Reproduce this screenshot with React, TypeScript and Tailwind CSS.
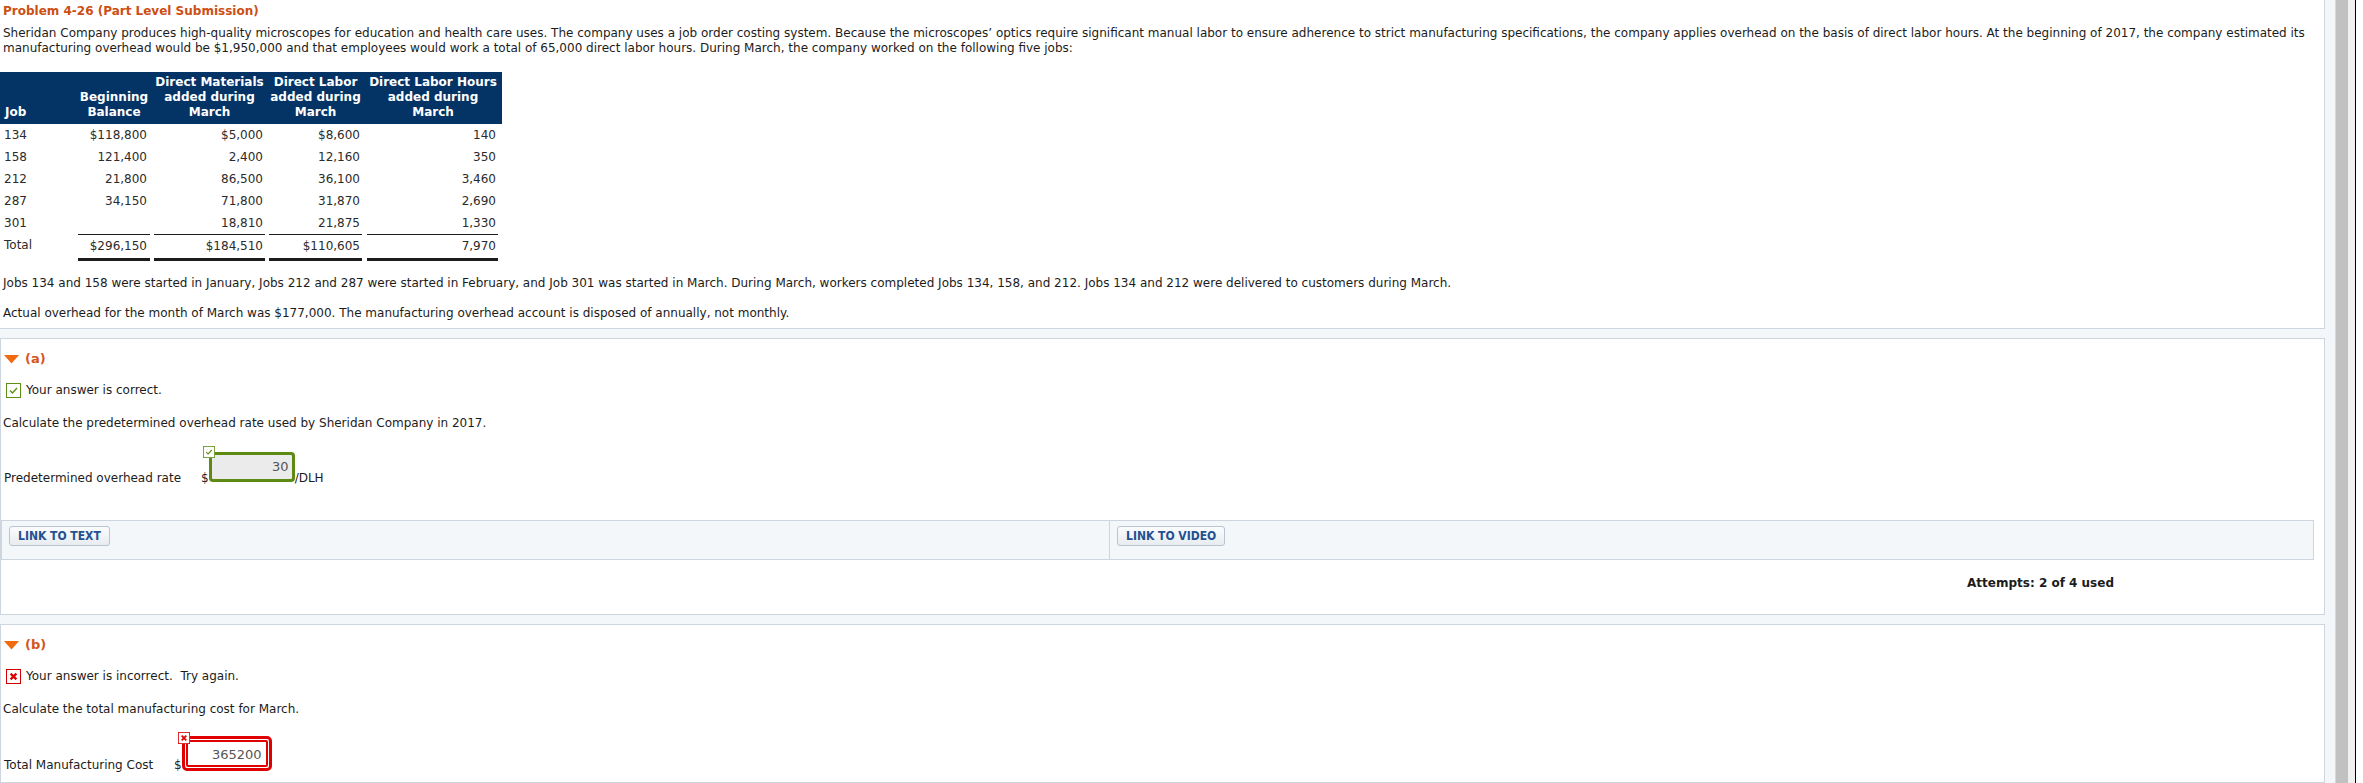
import React from 'react';

const rows = [
  { job: '134', bb: '$118,800', dm: '$5,000', dl: '$8,600', dlh: '140' },
  { job: '158', bb: '121,400', dm: '2,400', dl: '12,160', dlh: '350' },
  { job: '212', bb: '21,800', dm: '86,500', dl: '36,100', dlh: '3,460' },
  { job: '287', bb: '34,150', dm: '71,800', dl: '31,870', dlh: '2,690' },
  { job: '301', bb: '', dm: '18,810', dl: '21,875', dlh: '1,330' },
];

function Triangle() {
  return (
    <svg width="15" height="10" viewBox="0 0 15 10" className="shrink-0">
      <polygon points="0,1 15,1 7.5,9.5" fill="#f26a10" />
    </svg>
  );
}

function CheckBox({ size = 15 }: { size?: number }) {
  return (
    <svg width={size} height={size} viewBox="0 0 15 15" className="shrink-0 bg-white">
      <rect x="0.5" y="0.5" width="14" height="14" fill="#fff" stroke="#5d8f16" />
      <path d="M4 7.6 L6.4 10 L11 5" fill="none" stroke="#5d8f16" strokeWidth="1.4" />
    </svg>
  );
}

function CrossBox({ size = 15 }: { size?: number }) {
  return (
    <svg width={size} height={size} viewBox="0 0 15 15" className="shrink-0 bg-white">
      <rect x="0.5" y="0.5" width="14" height="14" fill="#fff" stroke="#d40000" />
      <path d="M4.6 4.6 L10.4 10.4 M10.4 4.6 L4.6 10.4" fill="none" stroke="#e00000" strokeWidth="2.2" />
    </svg>
  );
}

function LinkButton({ label }: { label: string }) {
  return (
    <div className="h-[20px] px-[8px] flex items-center rounded-[3px] border border-[#b9c4d0] bg-gradient-to-b from-[#fbfcfd] to-[#e8ecf0] font-['DejaVu_Sans_Condensed','DejaVu_Sans',sans-serif] text-[12px] font-bold text-[#25508f]">
      {label}
    </div>
  );
}

function PartHeader({ label }: { label: string }) {
  return (
    <div className="mt-[12px] h-[16px] flex items-center gap-[6px] pl-[3px]">
      <Triangle />
      <span className="text-[13px] font-bold text-[#d4561c] leading-[16px]">{label}</span>
    </div>
  );
}

export default function App() {
  return (
    <div className="w-[2363px] h-[783px] overflow-hidden flex bg-[#f4f7fa] font-['DejaVu_Sans',Verdana,sans-serif] text-[12px] leading-[15px] text-[#1c1c1c]">
      <div className="w-[2325px] shrink-0 flex flex-col">
        {/* Problem statement */}
        <section className="bg-white border-r border-b border-[#cdd5df] pl-[3px] pr-[10px] pt-[3px] pb-[7px]">
          <h1 className="m-0 text-[12px] leading-[16px] font-bold text-[#cc4f14]">Problem 4-26 (Part Level Submission)</h1>
          <p className="m-0 mt-[7px]">
            Sheridan Company produces high-quality microscopes for education and health care uses. The company uses a job order costing system. Because the microscopes’ optics require significant manual labor to ensure adherence to strict manufacturing specifications, the company applies overhead on the basis of direct labor hours. At the beginning of 2017, the company estimated its manufacturing overhead would be $1,950,000 and that employees would work a total of 65,000 direct labor hours. During March, the company worked on the following five jobs:
          </p>

          <div className="mt-[16px] ml-[-3px] w-[502px]">
            <div className="grid grid-cols-[76px_76px_115px_97px_138px] bg-[#043466] text-white font-bold leading-[15px] h-[52px] items-end pb-[4px]">
              <div className="pl-[5px]">Job</div>
              <div className="text-center">Beginning<br />Balance</div>
              <div className="text-center">Direct Materials<br />added during<br />March</div>
              <div className="text-center">Direct Labor<br />added during<br />March</div>
              <div className="text-center whitespace-nowrap">Direct Labor Hours<br />added during<br />March</div>
            </div>
            {rows.map((r) => (
              <div key={r.job} className="grid grid-cols-[76px_76px_115px_97px_138px] h-[22px] items-center text-[#2b2b2b]">
                <div className="pl-[4px]">{r.job}</div>
                <div className="text-right pr-[5px]">{r.bb}</div>
                <div className="text-right pr-[4px]">{r.dm}</div>
                <div className="text-right pr-[4px]">{r.dl}</div>
                <div className="text-right pr-[6px]">{r.dlh}</div>
              </div>
            ))}
            <div className="grid grid-cols-[76px_76px_115px_97px_138px] text-[#2b2b2b]">
              <div className="pl-[4px] h-[22px] flex items-center">Total</div>
              <div className="px-[2px]"><div className="border-t border-b-[3px] border-b-double border-[#1c1c1c] h-[27px] pr-[3px] flex items-center justify-end">$296,150</div></div>
              <div className="px-[2px]"><div className="border-t border-b-[3px] border-b-double border-[#1c1c1c] h-[27px] pr-[2px] flex items-center justify-end">$184,510</div></div>
              <div className="px-[2px]"><div className="border-t border-b-[3px] border-b-double border-[#1c1c1c] h-[27px] pr-[2px] flex items-center justify-end">$110,605</div></div>
              <div className="pl-[3px] pr-[4px]"><div className="border-t border-b-[3px] border-b-double border-[#1c1c1c] h-[27px] pr-[2px] flex items-center justify-end">7,970</div></div>
            </div>
          </div>

          <p className="m-0 mt-[15px]">
            Jobs 134 and 158 were started in January, Jobs 212 and 287 were started in February, and Job 301 was started in March. During March, workers completed Jobs 134, 158, and 212. Jobs 134 and 212 were delivered to customers during March.
          </p>
          <p className="m-0 mt-[15px]">
            Actual overhead for the month of March was $177,000. The manufacturing overhead account is disposed of annually, not monthly.
          </p>
        </section>

        {/* Part (a) */}
        <section className="mt-[9px] bg-white border border-[#cdd5df] pb-[23px]">
          <PartHeader label="(a)" />
          <div className="mt-[15px] h-[16px] flex items-center gap-[5px] pl-[5px]">
            <CheckBox />
            <span>Your answer is correct.</span>
          </div>
          <p className="m-0 mt-[17px] pl-[2px] leading-[16px]">Calculate the predetermined overhead rate used by Sheridan Company in 2017.</p>
          <div className="mt-[21px] flex items-end pl-[3px]">
            <span className="w-[197px] leading-[16px]">Predetermined overhead rate</span>
            <span className="leading-[16px]">$</span>
            <div className="relative mb-[4px]">
              <div className="w-[86px] h-[30px] border-[3px] border-[#5d8a12] rounded-[4px] bg-[#ebebeb] text-right pr-[3px] pt-[4px] text-[13px] text-[#555]">30</div>
              <div className="absolute left-[-6px] top-[-6px]">
                <CheckBox size={12} />
              </div>
            </div>
            <span className="leading-[16px]">/DLH</span>
          </div>

          <div className="mt-[34px] mr-[10px] h-[40px] flex border border-[#cdd5df] bg-[#f4f7fa]">
            <div className="w-[1108px] border-r border-[#cdd5df] pl-[7px] pt-[5px]">
              <div className="inline-block"><LinkButton label="LINK TO TEXT" /></div>
            </div>
            <div className="flex-1 pl-[7px] pt-[5px]">
              <div className="inline-block"><LinkButton label="LINK TO VIDEO" /></div>
            </div>
          </div>

          <div className="mt-[15px] h-[16px] flex justify-end pr-[210px] font-bold leading-[16px]">Attempts: 2 of 4 used</div>
        </section>

        {/* Part (b) */}
        <section className="mt-[9px] flex-1 bg-white border border-[#cdd5df]">
          <PartHeader label="(b)" />
          <div className="mt-[15px] h-[16px] flex items-center gap-[5px] pl-[5px]">
            <CrossBox />
            <span className="whitespace-pre">Your answer is incorrect.  Try again.</span>
          </div>
          <p className="m-0 mt-[17px] pl-[2px] leading-[16px]">Calculate the total manufacturing cost for March.</p>
          <div className="mt-[19px] flex items-end pl-[3px]">
            <span className="w-[170px] leading-[16px]">Total Manufacturing Cost</span>
            <span className="leading-[16px]">$</span>
            <div className="relative mb-[2px]">
              <div className="w-[90px] h-[35px] border-[3px] border-[#e00000] rounded-[5px] bg-white p-[1px]">
                <div className="h-full border-2 border-[#e00000] rounded-[2px] bg-white text-right pr-[4px] pt-[5px] text-[13px] text-[#555] leading-[16px]">365200</div>
              </div>
              <div className="absolute left-[-4px] top-[-4px]">
                <CrossBox size={12} />
              </div>
            </div>
          </div>
        </section>
      </div>

      {/* Scrollbar */}
      <div className="w-[10px] shrink-0" />
      <div className="w-[13px] shrink-0 bg-[#c1c1c1] border-l border-[#d8d8d8]" />
      <div className="w-[7px] shrink-0 bg-[#f0f0f0]" />
      <div className="w-[1px] shrink-0 bg-black" />
      <div className="flex-1 bg-white" />
    </div>
  );
}
